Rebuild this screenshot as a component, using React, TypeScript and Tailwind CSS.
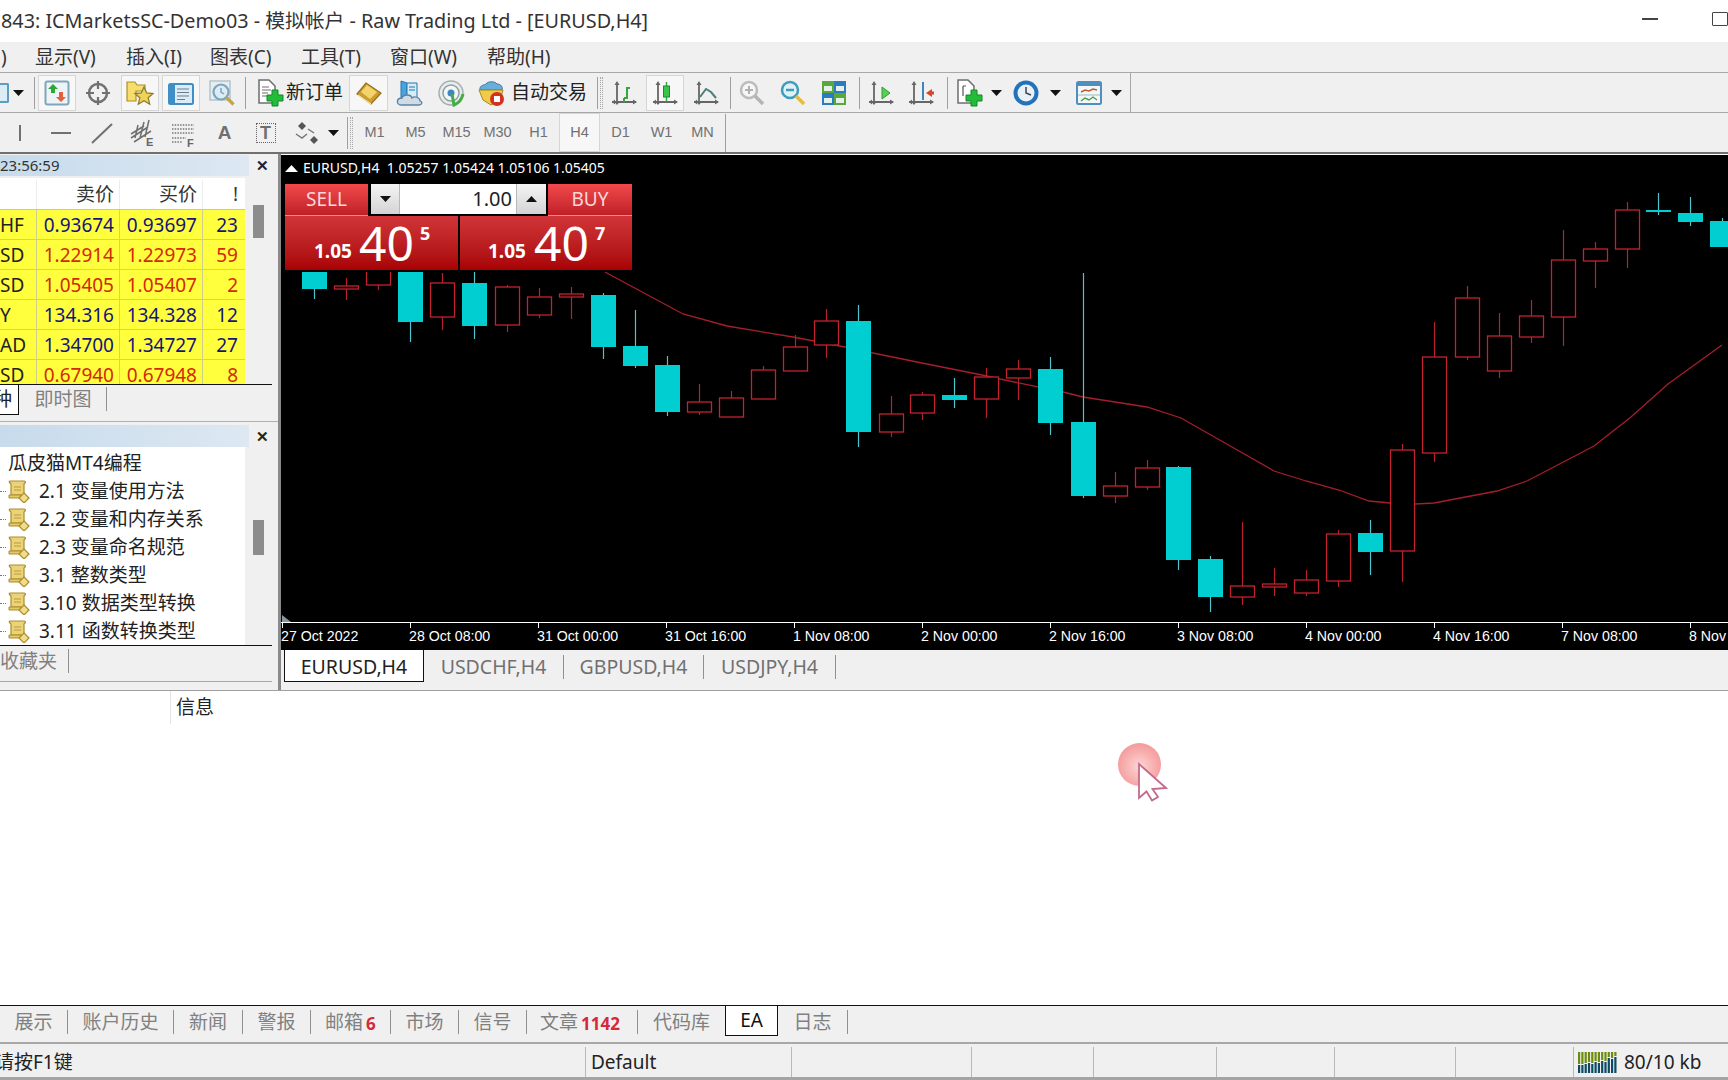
import React from "react";

type C = [number, "r" | "c", number, number, number, number];
const candles: C[] = [
  [314, "c", 262, 262, 289, 299], [346, "r", 278, 286, 289, 300], [378, "r", 262, 262, 285, 290],
  [410, "c", 262, 262, 322, 342], [442, "r", 273, 283, 317, 330], [474, "c", 272, 283, 326, 339],
  [507, "r", 285, 287, 325, 332], [539, "r", 288, 297, 315, 318], [571, "r", 287, 294, 297, 319],
  [603, "c", 293, 295, 347, 359], [635, "c", 310, 346, 366, 368], [667, "c", 356, 365, 412, 416],
  [699, "r", 384, 402, 412, 415], [731, "r", 391, 398, 417, 417], [763, "r", 366, 370, 399, 399],
  [795, "r", 335, 347, 371, 371], [826, "r", 309, 321, 345, 358], [858, "c", 305, 321, 432, 447],
  [891, "r", 396, 414, 432, 437], [922, "r", 392, 395, 413, 420], [954, "c", 378, 395, 400, 408],
  [986, "r", 368, 377, 399, 418], [1018, "r", 360, 369, 378, 400], [1050, "c", 357, 369, 423, 435],
  [1083, "c", 273, 422, 496, 498], [1115, "r", 472, 486, 496, 503], [1147, "r", 460, 468, 487, 490],
  [1178, "c", 466, 467, 560, 570], [1210, "c", 556, 559, 597, 612], [1242, "r", 522, 586, 597, 605],
  [1274, "r", 568, 584, 587, 596], [1306, "r", 570, 580, 593, 596], [1338, "r", 530, 534, 581, 587],
  [1370, "c", 520, 533, 552, 575], [1402, "r", 444, 450, 551, 582], [1434, "r", 322, 357, 453, 462],
  [1467, "r", 286, 298, 357, 360], [1499, "r", 313, 336, 371, 378], [1531, "r", 300, 316, 337, 343],
  [1563, "r", 230, 260, 317, 346], [1595, "r", 242, 249, 261, 288], [1627, "r", 202, 210, 249, 268],
  [1658, "c", 193, 210, 212, 215], [1690, "c", 197, 213, 222, 226], [1722, "c", 218, 221, 247, 247],
];
const ma =
  "605,272 670,307 683,314 727,326 793,337 845,347 873,353 922,363 987,376 1000,379 1063,392 1083,397 1147,407 1181,418 1232,447 1274,471 1306,481 1339,490 1369,501 1390,503 1415,504 1434,503 1497,491 1527,481 1594,446 1631,417 1668,384 1722,345";
const timeLabels = ["27 Oct 2022", "28 Oct 08:00", "31 Oct 00:00", "31 Oct 16:00", "1 Nov 08:00", "2 Nov 00:00", "2 Nov 16:00", "3 Nov 08:00", "4 Nov 00:00", "4 Nov 16:00", "7 Nov 08:00", "8 Nov 00:00"];
const quotes = [
  ["HF", "0.93674", "0.93697", "23", 0], ["SD", "1.22914", "1.22973", "59", 1], ["SD", "1.05405", "1.05407", "2", 1],
  ["Y", "134.316", "134.328", "12", 0], ["AD", "1.34700", "1.34727", "27", 0], ["SD", "0.67940", "0.67948", "8", 1],
] as const;
const lessons = ["2.1 变量使用方法", "2.2 变量和内存关系", "2.3 变量命名规范", "3.1 整数类型", "3.10 数据类型转换", "3.11 函数转换类型"];

const I = ({ children, s = 28 }: { children: React.ReactNode; s?: number }) => (
  <svg width={s} height={s} viewBox="0 0 28 28">{children}</svg>
);
const Arrow = () => (
  <svg width="11" height="6" viewBox="0 0 11 6"><path d="M0 0H11L5.5 6Z" fill="#111" /></svg>
);
const Plus = () => (
  <path d="M16 11h6v5h5v6h-5v5h-6v-5h-5v-6h5z" fill="#22bb3a" stroke="#0f8a28" strokeWidth="1" />
);
const Axes = () => (
  <g stroke="#666" strokeWidth="1.8" fill="#666">
    <path d="M7 4V25M2 23H26" fill="none" />
    <path d="M7 2l-2.5 4h5zM7 26l-2.5-3h5zM27 23l-4-2.5v5zM2 23l3-2.5v5z" stroke="none" />
  </g>
);
const Star = () => (
  <path d="M18 8l2.7 6 6.3.6-4.8 4.2 1.5 6.4-5.7-3.4-5.7 3.4 1.5-6.4L9 14.600l6.300-.6z" fill="#f0d254" stroke="#8d7c32" strokeWidth="1.300" />
);
const Cell = ({ c, children }: { c: string; children?: React.ReactNode }) => (
  <div className={`h-full flex items-center justify-center shrink-0 ${c}`}>{children}</div>
);
const Box = ({ c, children }: { c: string; children?: React.ReactNode }) => (
  <div className={`h-[36px] flex items-center justify-center shrink-0 bg-[#f7f7f7] border border-[#d6d6d6] ${c}`}>{children}</div>
);
const Sep = ({ c }: { c: string }) => <div className={`w-px h-[32px] shrink-0 bg-[#a0a0a0] ${c}`} />;
const Grip = ({ c }: { c: string }) => (
  <div className={`w-[3px] h-[32px] shrink-0 border-x border-dotted border-[#a8a8a8] ${c}`} />
);
const Scroll = () => (
  <svg width="23" height="23" viewBox="0 0 23 23" className="shrink-0">
    <path d="M3 1h14c1 0 2 1 1 2l-1 1v11l-13 0V4L3 3C2 2 2 1 3 1z" fill="#ecd377" stroke="#a98d2e" strokeWidth="1.200" />
    <path d="M7 7h7M7 10h7" stroke="#b89c3f" strokeWidth="1.200" />
    <path d="M2 15h12v3H2z" fill="#e6c862" stroke="#a98d2e" />
    <path d="M17 13l5 5-5 5-5-5z" fill="#f0dc8a" stroke="#a98d2e" strokeWidth="1.200" />
  </svg>
);

const BookIcon = () => (
  <I>
    <path d="M2 15L11 4l15 10-10 11z" fill="#cf9d2e" stroke="#96701c" strokeWidth="1.200" />
    <path d="M6 13l6-7 10 7-7 7z" fill="#f3d36c" />
    <path d="M3 16l13 9" stroke="#f6e6a8" strokeWidth="1.200" />
  </I>
);

export default function App() {
  return (
    <div className="w-[1728px] h-[1080px] overflow-hidden flex flex-col bg-[#f0f0f0] text-[#222] text-[19px] leading-none font-['Noto_Sans','Noto_Sans_CJK_SC',sans-serif]">
      {/* Title */}
      <div className="h-[42px] shrink-0 bg-white flex items-center justify-between text-[19.800px] text-[#333]">
        <div className="pl-[1px] -mt-[1px] whitespace-pre">843: ICMarketsSC-Demo03 - 模拟帐户 - Raw Trading Ltd - [EURUSD,H4]</div>
        <div className="flex items-center gap-[54px] -mt-[4px]">
          <div className="w-[16px] h-[2px] bg-[#444]" />
          <div className="w-[16px] h-[14px] border-[1.500px] border-[#444] rounded-[1px]" />
        </div>
      </div>

      {/* Menu */}
      <div className="h-[31px] shrink-0 flex items-center text-[#333] border-b border-[#a8a8a8] whitespace-nowrap">
        <span className="w-[35px] pl-[1px]">)</span>
        <span className="w-[91px]">显示(V)</span>
        <span className="w-[84px]">插入(I)</span>
        <span className="w-[91px]">图表(C)</span>
        <span className="w-[89px]">工具(T)</span>
        <span className="w-[97px]">窗口(W)</span>
        <span>帮助(H)</span>
      </div>

      {/* Toolbar 1 */}
      <div className="h-[40px] shrink-0 flex border-b border-[#a8a8a8]">
        <div className="h-full w-[1131px] shrink-0 flex items-center border-r border-[#a8a8a8] text-[#222]">
          <Cell c="w-[9px] justify-end overflow-hidden">
            <div className="w-[9px] h-[20px] bg-[#dcebf4] border-2 border-l-0 border-[#5d9cc5] rounded-r-[2px]" />
          </Cell>
          <Cell c="w-[18px]"><Arrow /></Cell>
          <Sep c="ml-[7px]" />
          <Box c="w-[38px] ml-[3px]">
            <I>
              <rect x="2.500" y="2.500" width="23" height="23" rx="2" fill="#eef3f6" stroke="#7ea6bd" strokeWidth="2" />
              <path d="M10 5l5 5h-3v4H8v-4H5z" fill="#2aa838" />
              <path d="M18 23l5-5h-3v-5h-4v5h-3z" fill="#e2603f" />
            </I>
          </Box>
          <Cell c="w-[40px] ml-[2px]">
            <I>
              <circle cx="14" cy="14" r="9" fill="none" stroke="#707070" strokeWidth="2.500" />
              <path d="M14 2v8M14 18v8M2 14h8M18 14h8" stroke="#707070" strokeWidth="2.200" />
            </I>
          </Cell>
          <Box c="w-[38px] ml-[3px]">
            <I>
              <path d="M1 3h8l2 3h8v6H10v10H1z" fill="#f6dd6c" stroke="#ab9128" strokeWidth="1.200" />
              <Star />
            </I>
          </Box>
          <Box c="w-[38px] ml-[3px]">
            <I>
              <rect x="2" y="5" width="24" height="20" rx="1.500" fill="#dcebf6" stroke="#3f8fc6" strokeWidth="2" />
              <rect x="3" y="6" width="5" height="18" fill="#3f8fc6" />
              <path d="M10 10h12M10 13.500h12M10 17h12M10 20.500h8" stroke="#6a7f8d" strokeWidth="1.200" />
            </I>
          </Box>
          <Cell c="w-[40px] ml-[2px]">
            <I>
              <rect x="2" y="2" width="20" height="19" fill="#e6edf1" stroke="#b4c3cb" strokeWidth="1.500" />
              <circle cx="13" cy="13" r="7.500" fill="#dcecf4" stroke="#7da4bc" strokeWidth="2.200" />
              <path d="M13 9v4l3 2" stroke="#7da4bc" strokeWidth="1.500" fill="none" />
              <path d="M18.500 18.500l7 7" stroke="#c8a53f" strokeWidth="3.200" />
            </I>
          </Cell>
          <Sep c="ml-[3px]" />
          <Cell c="w-[36px] ml-[4px] pl-[3px]">
            <I>
              <path d="M3 1h10l6 6v17H3z" fill="#fff" stroke="#6e6e6e" strokeWidth="1.500" />
              <path d="M6 8h7M6 11h9M6 14h6M6 17h5" stroke="#707070" strokeWidth="1.200" />
              <Plus />
            </I>
          </Cell>
          <div className="w-[58px] shrink-0 whitespace-nowrap">新订单</div>
          <Box c="w-[39px] ml-[5px]"><BookIcon /></Box>
          <Cell c="w-[40px] ml-[2px]">
            <I>
              <path d="M5 2l6 2v15H5z" fill="#47a4de" stroke="#2576ad" />
              <path d="M11 4h10v15H11z" fill="#d6ecf8" stroke="#2576ad" />
              <path d="M13 8h6M13 11h6" stroke="#2576ad" />
              <path d="M5 26c-5 0-5-7 1-7 1-4 9-4 10 0 2-2 8-1 8 3 3 1 2 4-1 4z" fill="#cfdce7" stroke="#5d83a2" strokeWidth="1.300" />
            </I>
          </Cell>
          <Cell c="w-[41px]">
            <I>
              <circle cx="14" cy="14" r="12" fill="#e6ebeb" stroke="#a7aeae" strokeWidth="1.500" />
              <circle cx="14" cy="14" r="8" fill="#f3f6f6" stroke="#8fa0a3" strokeWidth="1.500" />
              <circle cx="14" cy="14" r="3.500" fill="#3f86c2" />
              <path d="M15 15l2 11c5-2 8-6 9-11" fill="none" stroke="#46ad44" strokeWidth="3" />
            </I>
          </Cell>
          <Cell c="w-[40px]">
            <I>
              <path d="M3 11c-1-5 5-5 6-6 2-3 9-3 11 0 4 0 6 3 5 6z" fill="#67aedd" stroke="#3977a3" />
              <path d="M2 11h24l-3 10-9 5-8-5z" fill="#f0ca49" stroke="#a68a21" />
              <circle cx="20" cy="20" r="7" fill="#d23220" />
              <rect x="17" y="17" width="6" height="6" fill="#fff" />
            </I>
          </Cell>
          <div className="w-[76px] shrink-0 whitespace-nowrap">自动交易</div>
          <Sep c="ml-[10px]" />
          <Grip c="ml-[2px]" />
          <Cell c="w-[40px] ml-[1px]">
            <I><Axes /><path d="M14 19h3V9h3M14 23V19" fill="none" stroke="#35a83d" strokeWidth="2" /></I>
          </Cell>
          <Box c="w-[38px] ml-[2px]">
            <I>
              <Axes />
              <path d="M15.500 3v20" stroke="#35a83d" strokeWidth="1.500" />
              <rect x="12.500" y="7" width="6" height="11" fill="#3ac44a" stroke="#1f8a2f" />
            </I>
          </Box>
          <Cell c="w-[40px] ml-[2px]">
            <I><Axes /><path d="M8 18l6-8 5 3 5 6" fill="none" stroke="#4d7d7d" strokeWidth="2" /></I>
          </Cell>
          <Sep c="ml-[4px]" />
          <Cell c="w-[38px] ml-[2px]">
            <I>
              <circle cx="11" cy="11" r="8" fill="#f6f6f6" stroke="#bcbcbc" strokeWidth="2.500" />
              <path d="M11 7v8M7 11h8" stroke="#b0b0b0" strokeWidth="2" />
              <path d="M17 17l8 8" stroke="#b4b4b4" strokeWidth="3.500" />
            </I>
          </Cell>
          <Cell c="w-[40px] ml-[2px]">
            <I>
              <circle cx="11" cy="11" r="8" fill="#dff1f4" stroke="#3f9dbb" strokeWidth="2.500" />
              <path d="M7 11h8" stroke="#3f9dbb" strokeWidth="2.500" />
              <path d="M17 17l8 8" stroke="#e3bc44" strokeWidth="3.500" />
            </I>
          </Cell>
          <Cell c="w-[40px] ml-[1px]">
            <I>
              <rect x="2" y="2" width="12" height="12" fill="#5aa83c" />
              <rect x="14" y="2" width="12" height="12" fill="#2b7bc2" />
              <rect x="2" y="14" width="12" height="12" fill="#2b7bc2" />
              <rect x="14" y="14" width="12" height="12" fill="#5aa83c" />
              <path d="M4 7h8v5H4zM16 7h8v5h-8zM4 19h8v5H4zM16 19h8v5h-8z" fill="#e4f1e6" />
            </I>
          </Cell>
          <Sep c="ml-[5px]" />
          <Cell c="w-[40px] ml-[1px]">
            <I><Axes /><path d="M15 8l8 6-8 6z" fill="#58cf55" stroke="#2d9a30" /></I>
          </Cell>
          <Cell c="w-[40px]">
            <I><Axes /><path d="M16 3v18" stroke="#2b79b5" strokeWidth="1.800" /><path d="M19 14l6-4v2.500h2v3h-2V18z" fill="#d8452c" /></I>
          </Cell>
          <Sep c="ml-[6px]" />
          <Cell c="w-[40px] ml-[1px]">
            <I>
              <path d="M3 1h10l6 6v17H3z" fill="#fff" stroke="#6e6e6e" strokeWidth="1.500" />
              <path d="M8 7h3M8 7v10" stroke="#555" strokeWidth="1.200" fill="none" />
              <Plus />
            </I>
          </Cell>
          <Cell c="w-[14px]"><Arrow /></Cell>
          <Cell c="w-[40px] ml-[3px]">
            <I>
              <circle cx="14" cy="14" r="12.500" fill="#2373bb" />
              <circle cx="14" cy="14" r="8.500" fill="#e9f1f8" />
              <path d="M14 8v6l5 2" fill="none" stroke="#444" strokeWidth="1.500" />
            </I>
          </Cell>
          <Cell c="w-[18px]"><Arrow /></Cell>
          <Cell c="w-[38px] ml-[6px]">
            <I>
              <rect x="2" y="3" width="24" height="22" rx="1.500" fill="#f4f7f9" stroke="#4e8fbf" strokeWidth="2" />
              <rect x="3" y="4" width="22" height="3" fill="#4e8fbf" />
              <path d="M3 16h22" stroke="#9bb" />
              <path d="M6 13l4-2 4 1 4-2 4 1" fill="none" stroke="#c85a30" strokeWidth="1.400" />
              <path d="M6 22l4-3 4 2 4-3 4 3" fill="none" stroke="#4a9a55" strokeWidth="1.400" />
            </I>
          </Cell>
          <Cell c="w-[16px]"><Arrow /></Cell>
        </div>
      </div>

      {/* Toolbar 2 */}
      <div className="h-[39px] shrink-0 flex items-center text-[#707070] text-[14.500px] font-['Liberation_Sans','Noto_Sans',sans-serif]">
        <Cell c="w-[40px]"><I><path d="M14 6v16" stroke="#707070" strokeWidth="2" /></I></Cell>
        <Cell c="w-[41px]"><I><path d="M4 14h20" stroke="#707070" strokeWidth="2" /></I></Cell>
        <Cell c="w-[41px]"><I><path d="M4 24L24 5" stroke="#707070" strokeWidth="2" /></I></Cell>
        <Cell c="w-[41px]">
          <I>
            <path d="M2 19L19 8M5 23L22 12M2 15L15 7M9 6l-3 13M15 3l-4 16M20 1l-4 17" stroke="#707070" strokeWidth="1.500" fill="none" />
            <text x="17" y="27" fontSize="11" fontWeight="700" fill="#666">E</text>
          </I>
        </Cell>
        <Cell c="w-[41px]">
          <I>
            <path d="M2 6h22M2 10h22M2 14h22M2 19h14M2 23h10" stroke="#777" strokeWidth="1.300" strokeDasharray="1.500 1.200" />
            <text x="17" y="28" fontSize="11" fontWeight="700" fill="#666">F</text>
          </I>
        </Cell>
        <Cell c="w-[41px]"><span className="text-[19px] font-bold text-[#707070]">A</span></Cell>
        <Cell c="w-[41px]">
          <div className="w-[20px] h-[20px] border border-dotted border-[#666] flex items-center justify-center text-[18px] font-bold text-[#707070]">T</div>
        </Cell>
        <Cell c="w-[40px]">
          <I>
            <path d="M6 7l4-4 4 4-4 4z" fill="#555" />
            <path d="M18 21l4-4 4 4-4 4z" fill="#555" />
            <path d="M4 15l6 4 5-4M16 10l6 4" fill="none" stroke="#777" strokeWidth="1.500" />
          </I>
        </Cell>
        <Cell c="w-[14px]"><Arrow /></Cell>
        <Sep c="ml-[7px]" />
        <Grip c="ml-[2px]" />
        <div className="flex items-center ml-[1px] h-full">
          {["M1", "M5", "M15", "M30", "H1"].map((t) => (
            <Cell key={t} c="w-[41px]">{t}</Cell>
          ))}
          <Box c="w-[41px] h-full">{"H4"}</Box>
          {["D1", "W1", "MN"].map((t) => (
            <Cell key={t} c="w-[41px]">{t}</Cell>
          ))}
        </div>
        <Sep c="ml-[2px] h-[38px]" />
      </div>

      {/* Body */}
      <div className="h-[538px] shrink-0 flex border-t-2 border-[#707070]">
        {/* Left column */}
        <div className="w-[278px] shrink-0 flex flex-col pt-[1px]">
          <div className="h-[21px] shrink-0 flex items-center">
            <div className="w-[249px] h-full bg-gradient-to-r from-[#c7dbec] to-[#dde8f2] text-[15px] flex items-center text-[#333]">23:56:59</div>
            <div className="w-[27px] text-center text-[15px] font-bold text-[#222]">✕</div>
          </div>
          <div className="h-[206px] shrink-0 flex mt-[2px]">
            <div className="w-[245px] shrink-0 bg-white flex flex-col">
              <div className="h-[32px] shrink-0 flex border-b border-[#c4c4c4] text-[#333] pt-[2px]">
                <div className="w-[37px] border-r border-[#ececec]" />
                <div className="w-[83px] border-r border-[#ececec] flex items-center justify-end pr-[5px]">卖价</div>
                <div className="w-[83px] border-r border-[#ececec] flex items-center justify-end pr-[5px]">买价</div>
                <div className="w-[42px] flex items-center justify-end pr-[7px]">!</div>
              </div>
              <div className="h-[174px] overflow-hidden bg-[#ffff3e]">
                {quotes.map((q, i) => (
                  <div key={i} className={`h-[30px] flex border-b border-[#cfcf8c] ${q[4] ? "text-[#d22a08]" : "text-[#14147a]"}`}>
                    <div className="w-[37px] border-r border-[#cfcf8c] flex items-center pt-[2px] text-[#222] overflow-hidden">{q[0]}</div>
                    <div className="w-[83px] border-r border-[#cfcf8c] flex items-center pt-[2px] justify-end pr-[5px]">{q[1]}</div>
                    <div className="w-[83px] border-r border-[#cfcf8c] flex items-center pt-[2px] justify-end pr-[5px]">{q[2]}</div>
                    <div className="w-[42px] flex items-center pt-[2px] justify-end pr-[7px]">{q[3]}</div>
                  </div>
                ))}
              </div>
            </div>
            <div className="w-[27px] shrink-0 pl-[8px] pt-[27px]">
              <div className="w-[11px] h-[33px] bg-[#8c8c8c]" />
            </div>
          </div>
          <div className="h-[32px] w-[272px] shrink-0 flex border-t border-[#111] items-start text-[#808080]">
            <div className="w-[19px] h-[30px] bg-white border-r border-b border-[#111] overflow-hidden flex items-center text-[#222]">
              <span className="shrink-0 -ml-[7px]">种</span>
            </div>
            <div className="w-[88px] h-[24px] mt-[2px] border-r border-[#909090] flex items-center justify-center pl-[1px]">即时图</div>
          </div>
          {/* Navigator */}
          <div className="h-[6px] shrink-0 border-t border-[#b0b0b0] mt-[5px]" />
          <div className="h-[22px] shrink-0 flex items-center -mt-[2px]">
            <div className="w-[249px] h-full bg-gradient-to-r from-[#c7dbec] to-[#dde8f2]" />
            <div className="w-[27px] text-center text-[15px] font-bold text-[#222]">✕</div>
          </div>
          <div className="h-[198px] shrink-0 flex">
            <div className="w-[245px] shrink-0 bg-white overflow-hidden pt-[2px] text-[#222]">
              <div className="h-[28px] flex items-center pl-[8px]">瓜皮猫MT4编程</div>
              {lessons.map((l) => (
                <div key={l} className="h-[28px] flex items-center whitespace-pre">
                  <div className="w-[6px] border-t border-dotted border-[#777]" />
                  <div className="ml-[1px]"><Scroll /></div>
                  <span className="ml-[9px]">{l}</span>
                </div>
              ))}
            </div>
            <div className="w-[27px] shrink-0 pl-[8px] pt-[73px]">
              <div className="w-[11px] h-[35px] bg-[#8c8c8c]" />
            </div>
          </div>
          <div className="h-[37px] w-[272px] shrink-0 border-t border-[#111] border-b border-b-[#a8a8a8] flex items-start text-[#808080]">
            <div className="w-[69px] h-[24px] mt-[3px] border-r border-[#909090] flex items-center">收藏夹</div>
          </div>
        </div>

        {/* Chart column */}
        <div className="flex-1 min-w-0 flex flex-col border-l-[3px] border-[#8a8a8a]">
          <div className="relative h-[496px] shrink-0 bg-black border-t border-white flex flex-col">
            <svg className="block shrink-0" width="1447" height="467" viewBox="281 155 1447 467">
              <polyline points={ma} fill="none" stroke="#a41e2c" strokeWidth="1.300" />
              {candles.map(([x, t, wt, bt, bb, wb], i) => (
                <g key={i}>
                  <path d={`M${x + 0.5} ${wt}V${wb}`} stroke={t === "c" ? "#4fc4cc" : "#b8202c"} strokeWidth="1.200" />
                  {t === "c" ? (
                    <rect x={x - 12} y={bt} width="25" height={bb - bt} fill="#00ced1" />
                  ) : (
                    <rect x={x - 11.5} y={bt} width="24" height={bb - bt} fill="#000" stroke="#c4222e" strokeWidth="1.300" />
                  )}
                </g>
              ))}
              <polygon points="282,615 282,622 291,622" fill="#8c969c" />
            </svg>
            <div className="h-[28px] shrink-0 border-t border-white flex text-white text-[14.200px] font-['Liberation_Sans',sans-serif] overflow-hidden">
              {timeLabels.map((t) => (
                <div key={t} className="relative w-[128px] shrink-0 pt-[6px] whitespace-nowrap">
                  <div className="absolute left-[1px] top-0 w-px h-[5px] bg-white" />
                  {t}
                </div>
              ))}
            </div>

            <div className="absolute left-[4px] top-[6px] flex items-center text-white text-[14px] whitespace-pre">
              <svg width="13" height="7" viewBox="0 0 13 7" className="mr-[5px]"><path d="M0 7L6.500 0 13 7z" fill="#fff" /></svg>
              EURUSD,H4  1.05257 1.05424 1.05106 1.05405
            </div>

            {/* Trade panel */}
            <div className="absolute left-[4px] top-[29px] w-[347px] flex flex-col bg-black pb-[2px]">
              <div className="flex h-[32px]">
                <div className="w-[83px] h-full bg-gradient-to-b from-[#f2494d] to-[#bf2026] text-[#f9d9d9] flex items-center justify-center border-b border-[#ec8a8a]">SELL</div>
                <div className="w-[175px] ml-[3px] h-[30px] flex bg-white">
                  <div className="w-[29px] bg-gradient-to-b from-[#f4f4f4] to-[#d4d4d4] flex items-center justify-center border-r border-[#b8b8b8]">
                    <Arrow />
                  </div>
                  <div className="flex-1 flex items-center justify-end pr-[4px] text-[#222] text-[20px]">1.00</div>
                  <div className="w-[30px] bg-gradient-to-b from-[#f4f4f4] to-[#d4d4d4] flex items-center justify-center border-l border-[#b8b8b8]">
                    <svg width="11" height="6" viewBox="0 0 11 6"><path d="M0 6H11L5.500 0Z" fill="#111" /></svg>
                  </div>
                </div>
                <div className="w-[84px] ml-[2px] h-full bg-gradient-to-b from-[#f2494d] to-[#bf2026] text-[#f9d9d9] flex items-center justify-center border-b border-[#ec8a8a]">BUY</div>
              </div>
              <div className="flex gap-[2px] h-[54px] text-white">
                <div className="w-[173px] bg-gradient-to-b from-[#d13438] to-[#a80003] flex items-start pl-[29px] pt-[2px]">
                  <span className="self-end mb-[9px] font-bold text-[19px] w-[45px]">1.05</span>
                  <span className="text-[48px] leading-[50px] w-[61px]">40</span>
                  <span className="text-[18px] font-bold mt-[6px]">5</span>
                </div>
                <div className="w-[172px] bg-gradient-to-b from-[#d13438] to-[#a80003] flex items-start pl-[28px] pt-[2px]">
                  <span className="self-end mb-[9px] font-bold text-[19px] w-[46px]">1.05</span>
                  <span className="text-[48px] leading-[50px] w-[61px]">40</span>
                  <span className="text-[18px] font-bold mt-[6px]">7</span>
                </div>
              </div>
            </div>
          </div>

          {/* Chart tabs */}
          <div className="flex-1 flex items-start pl-[3px] text-[#707070] text-[19.500px] whitespace-nowrap border-b border-[#f0f0f0]">
            <div className="w-[140px] h-[32px] pt-[2px] bg-white border-x border-b border-[#111] text-[#222] flex items-center justify-center">EURUSD,H4</div>
            <div className="w-[140px] h-[24px] mt-[5px] border-r border-[#909090] flex items-center justify-center">USDCHF,H4</div>
            <div className="w-[140px] h-[24px] mt-[5px] border-r border-[#909090] flex items-center justify-center">GBPUSD,H4</div>
            <div className="w-[132px] h-[24px] mt-[5px] border-r border-[#909090] flex items-center justify-center">USDJPY,H4</div>
          </div>
        </div>
      </div>

      {/* Info panel */}
      <div className="relative h-[315px] shrink-0 bg-white border-t border-[#a0a0a0]">
        <div className="h-[33px] w-[214px] ml-[170px] border-l border-[#e4e4e4] pl-[5px] flex items-center text-[#222]">信息</div>
        <div className="absolute left-[1118px] top-[52px] w-[43px] h-[43px] rounded-full bg-[radial-gradient(circle_at_50%_55%,#fbd6d6_0%,#f7a8a8_55%,#f08a8a_100%)]" />
        <svg className="absolute left-[1137px] top-[71px]" width="31" height="40" viewBox="0 0 31 40">
          <path d="M2 2V36L9.500 29.500 15 38.500 21 35 15.500 27 29 26Z" fill="#fff" stroke="#c46a8c" strokeWidth="1.800" />
        </svg>
      </div>

      {/* Bottom tabs */}
      <div className="h-[37px] shrink-0 border-t border-[#111] flex items-start text-[#808080] whitespace-nowrap">
        {[
          ["w-[68px]", "展示"], ["w-[106px]", "账户历史"], ["w-[69px]", "新闻"], ["w-[68px]", "警报"],
        ].map(([w, t]) => (
          <div key={t} className={`${w} h-[24px] mt-[4px] border-r border-[#909090] flex items-center justify-center`}>{t}</div>
        ))}
        <div className="w-[80px] h-[24px] mt-[4px] border-r border-[#909090] flex items-center pl-[14px]">邮箱<span className="ml-[3px] mt-[3px] text-[17px] font-bold text-[#d42a3a]">6</span></div>
        <div className="w-[68px] h-[24px] mt-[4px] border-r border-[#909090] flex items-center justify-center">市场</div>
        <div className="w-[68px] h-[24px] mt-[4px] border-r border-[#909090] flex items-center justify-center">信号</div>
        <div className="w-[111px] h-[24px] mt-[4px] border-r border-[#909090] flex items-center pl-[13px]">文章<span className="ml-[3px] mt-[3px] text-[17px] font-bold text-[#d42a3a]">1142</span></div>
        <div className="w-[87px] h-[24px] mt-[4px] flex items-center justify-center">代码库</div>
        <div className="w-[53px] h-[30px] bg-white border-x border-b border-[#111] text-[#111] flex items-center justify-center">EA</div>
        <div className="w-[70px] h-[24px] mt-[4px] border-r border-[#909090] flex items-center justify-center">日志</div>
      </div>

      {/* Status bar */}
      <div className="flex-1 flex items-end border-t-2 border-t-[#a8a8a8] border-b-[3px] border-b-[#a4a4a4] text-[#222]">
        <div className="w-[585px] h-[30px] flex items-center whitespace-nowrap overflow-hidden -indent-[5px]">请按F1键</div>
        <div className="w-[206px] h-[30px] border-l border-[#b8b8b8] flex items-center pl-[5px]">Default</div>
        <div className="w-[180px] h-[30px] border-l border-[#b8b8b8]" />
        <div className="w-[122px] h-[30px] border-l border-[#b8b8b8]" />
        <div className="w-[123px] h-[30px] border-l border-[#b8b8b8]" />
        <div className="w-[118px] h-[30px] border-l border-[#b8b8b8]" />
        <div className="w-[121px] h-[30px] border-l border-[#b8b8b8]" />
        <div className="w-[118px] h-[30px] border-l border-[#b8b8b8]" />
        <div className="flex-1 h-[30px] border-l border-[#b8b8b8] flex items-center pl-[4px]">
          <svg width="40" height="21" viewBox="0 0 40 21" className="mr-[6px]">
            {[13, 13, 12, 11, 12, 10, 11, 9, 10, 6, 7, 5].map((h, i) => (
              <g key={i}>
                <rect x={i * 3.300} y="0" width="2.200" height={h - 1} fill="#6c8c10" />
                <rect x={i * 3.300} y={h} width="2.200" height={21 - h} fill="#0d4a64" />
              </g>
            ))}
          </svg>
          80/10 kb
        </div>
      </div>
    </div>
  );
}
